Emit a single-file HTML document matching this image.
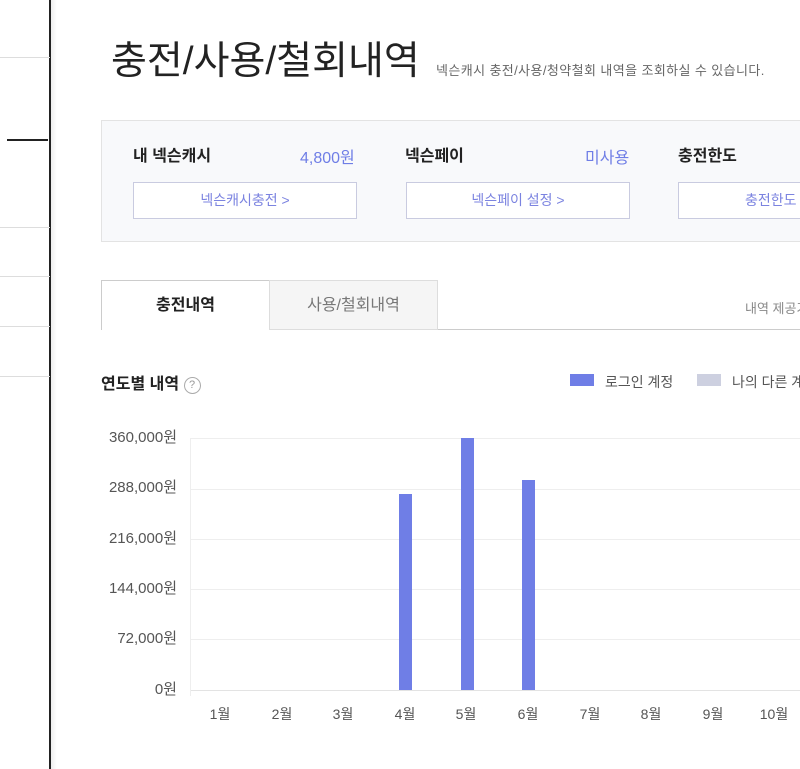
<!DOCTYPE html>
<html><head><meta charset="utf-8"><style>
*{margin:0;padding:0;box-sizing:border-box}
body{width:800px;height:769px;overflow:hidden;background:#fff;font-family:"Liberation Sans","Noto Sans CJK KR",sans-serif;position:relative;color:#222}
.a{position:absolute;white-space:nowrap}
.hl{position:absolute;left:0;width:50px;height:1px;background:#ddd}
.btn{position:absolute;top:182px;height:37px;border:1px solid #c9cbe0;background:#fff;color:#7b83e0;font-size:14px;text-align:center;line-height:35px}
.grid{position:absolute;left:190px;width:610px;height:1px;background:#eee}
.yl{position:absolute;right:623px;font-size:15px;color:#555;line-height:16px}
.ml{position:absolute;top:704px;font-size:14px;color:#555;width:40px;text-align:center}
.bar{position:absolute;width:13px;background:#6f7ee6}
</style></head><body>
<div style="position:absolute;left:49px;top:0;width:2px;height:769px;background:#222"></div>
<div style="position:absolute;left:51px;top:0;width:6px;height:769px;background:linear-gradient(to right,#eee,#fff)"></div>
<div class="hl" style="top:57px"></div>
<div class="hl" style="top:227px"></div>
<div class="hl" style="top:276px"></div>
<div class="hl" style="top:326px"></div>
<div class="hl" style="top:376px"></div>
<div style="position:absolute;left:7px;top:139px;width:41px;height:2px;background:#222"></div>

<div class="a" style="left:111px;top:30px;font-size:39px;color:#222;letter-spacing:0">충전/사용/철회내역</div>
<div class="a" style="left:436px;top:60px;font-size:13px;color:#666;letter-spacing:0.4px">넥슨캐시 충전/사용/청약철회 내역을 조회하실 수 있습니다.</div>

<div style="position:absolute;left:101px;top:120px;width:720px;height:122px;background:#f8f9fb;border:1px solid #e3e3e3"></div>
<div class="a" style="left:133px;top:142px;font-size:16px;font-weight:bold">내 넥슨캐시</div>
<div class="a" style="left:300px;top:144px;font-size:16px;color:#6f7ee6">4,800원</div>
<div class="btn" style="left:133px;width:224px">넥슨캐시충전 &gt;</div>
<div class="a" style="left:405px;top:142px;font-size:16px;font-weight:bold">넥슨페이</div>
<div class="a" style="left:585px;top:144px;font-size:16px;color:#6f7ee6">미사용</div>
<div class="btn" style="left:406px;width:224px">넥슨페이 설정 &gt;</div>
<div class="a" style="left:678px;top:142px;font-size:16px;font-weight:bold">충전한도</div>
<div class="btn" style="left:678px;width:224px;text-align:left;padding-left:66px">충전한도 설정 &gt;</div>

<div style="position:absolute;left:269px;top:329px;width:531px;height:1px;background:#ccc"></div>
<div style="position:absolute;left:101px;top:280px;width:169px;height:50px;border:1px solid #ccc;border-bottom:none;background:#fff;text-align:center;line-height:50px;font-size:16px;font-weight:bold">충전내역</div>
<div style="position:absolute;left:269px;top:280px;width:169px;height:50px;border:1px solid #ddd;background:#f5f5f5;text-align:center;line-height:50px;font-size:16px;color:#777">사용/철회내역</div>
<div class="a" style="left:745px;top:298px;font-size:13px;color:#888">내역 제공기간</div>

<div class="a" style="left:101px;top:370px;font-size:16px;font-weight:bold">연도별 내역 <span style="display:inline-block;width:17px;height:17px;border:1px solid #aaa;border-radius:50%;font-size:11px;line-height:15px;text-align:center;color:#999;font-weight:normal;vertical-align:1px">?</span></div>
<div style="position:absolute;left:570px;top:374px;width:24px;height:12px;background:#6f7ee6"></div>
<div class="a" style="left:605px;top:372px;font-size:14px;color:#555">로그인 계정</div>
<div style="position:absolute;left:697px;top:374px;width:24px;height:12px;background:#cdd0e0"></div>
<div class="a" style="left:732px;top:372px;font-size:14px;color:#555">나의 다른 계정</div>

<div class="grid" style="top:438px"></div>
<div class="grid" style="top:489px"></div>
<div class="grid" style="top:539px"></div>
<div class="grid" style="top:589px"></div>
<div class="grid" style="top:639px"></div>
<div class="grid" style="top:690px;background:#e3e3e3"></div>
<div style="position:absolute;left:190px;top:438px;width:1px;height:258px;background:#eee"></div>
<div class="yl" style="top:430px">360,000원</div>
<div class="yl" style="top:480px">288,000원</div>
<div class="yl" style="top:531px">216,000원</div>
<div class="yl" style="top:581px">144,000원</div>
<div class="yl" style="top:631px">72,000원</div>
<div class="yl" style="top:682px">0원</div>

<div class="bar" style="left:399px;top:494px;height:196px"></div>
<div class="bar" style="left:461px;top:438px;height:252px"></div>
<div class="bar" style="left:522px;top:480px;height:210px"></div>

<div class="ml" style="left:200px">1월</div>
<div class="ml" style="left:262px">2월</div>
<div class="ml" style="left:323px">3월</div>
<div class="ml" style="left:385px">4월</div>
<div class="ml" style="left:446px">5월</div>
<div class="ml" style="left:508px">6월</div>
<div class="ml" style="left:570px">7월</div>
<div class="ml" style="left:631px">8월</div>
<div class="ml" style="left:693px">9월</div>
<div class="ml" style="left:754px">10월</div>
</body></html>
